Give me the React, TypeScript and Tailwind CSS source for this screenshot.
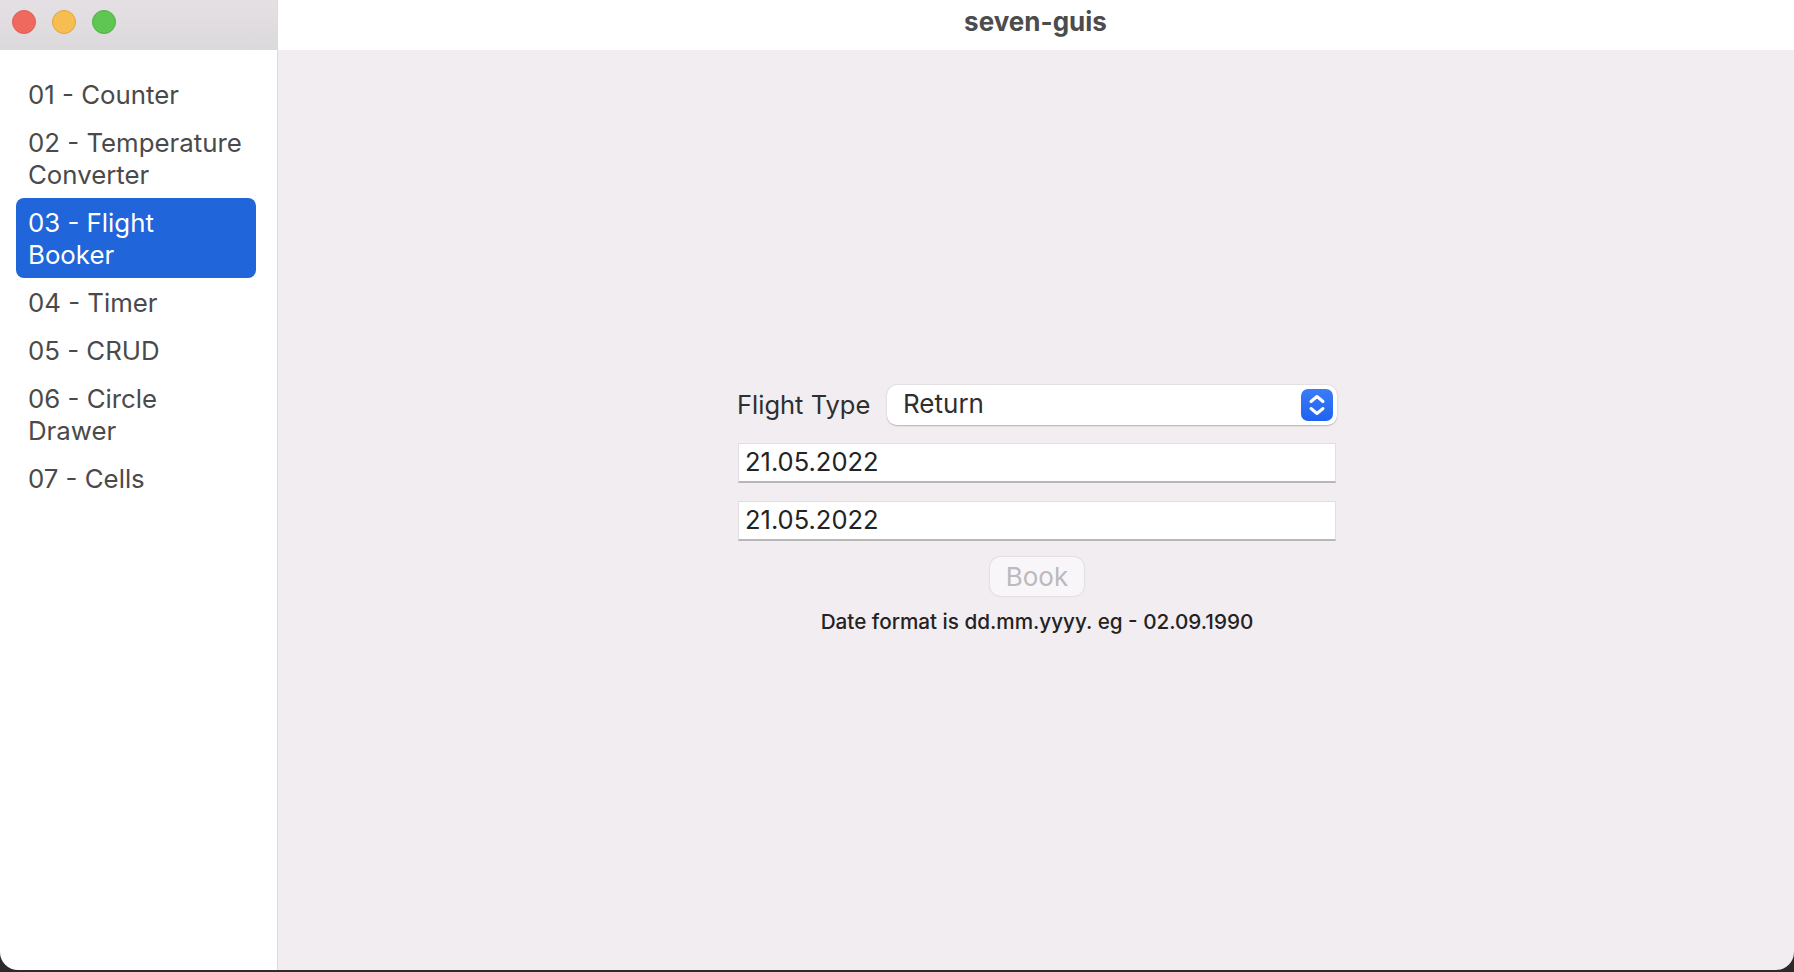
import React from 'react';

const ITEMS = [
  '01 - Counter',
  '02 - Temperature Converter',
  '03 - Flight Booker',
  '04 - Timer',
  '05 - CRUD',
  '06 - Circle Drawer',
  '07 - Cells',
];

function SelectArrows() {
  return (
    <div className="h-[32px] w-[32px] rounded-[7px] bg-gradient-to-b from-[#3b7cf6] to-[#1f62f0]">
      <svg width="32" height="32" viewBox="0 0 32 32" fill="none" stroke="white" strokeWidth="3" strokeLinecap="round" strokeLinejoin="round">
        <path d="M10 12.5 16 7.5l6 5" />
        <path d="M10 19.5 16 24.5l6-5" />
      </svg>
    </div>
  );
}

function DateField({ value }: { value: string }) {
  return (
    <div className="flex h-[40px] w-[598px] items-center border border-[#e2dde1] border-b-[#b9b6b8] border-b-2 bg-white pl-[6px] text-[25.5px] text-[#232323]">
      {value}
    </div>
  );
}

export default function App() {
  return (
    <div className="h-[972px] w-[1794px] overflow-hidden bg-[#2b2b2b] font-['Inter',sans-serif]">
      <div className="flex h-[970px] w-full overflow-hidden rounded-b-[18px]">
        {/* Sidebar */}
        <aside className="flex w-[278px] shrink-0 flex-col border-r border-r-[#dcd8dc] bg-white">
          <div className="flex h-[50px] items-center gap-[16px] bg-gradient-to-b from-[#e4e0e4] to-[#dcd9dd] pb-[6px] pl-[12px]">
            <span className="h-[24px] w-[24px] rounded-full border border-[#dc5d55] bg-[#f0695f]" />
            <span className="h-[24px] w-[24px] rounded-full border border-[#dfa63f] bg-[#f6bd50]" />
            <span className="h-[24px] w-[24px] rounded-full border border-[#52b044] bg-[#5fc553]" />
          </div>
          <nav className="flex flex-col pl-[16px] pr-[21px] pt-[20px]">
            {ITEMS.map((item) => {
              const active = item.startsWith('03');
              return (
                <div
                  key={item}
                  className={`rounded-[8px] pb-[7px] pl-[12px] pr-[11px] pt-[9px] text-[25.8px] leading-[32px] ${
                    active ? 'bg-[#2065d9] text-white' : 'text-[#4a4a4a]'
                  }`}
                >
                  {item}
                </div>
              );
            })}
          </nav>
        </aside>

        {/* Main */}
        <div className="flex min-w-0 flex-1 flex-col bg-[#f2edf1]">
          <header className="flex h-[50px] items-center justify-center bg-white pb-[8px] pr-[1px] text-[26px] font-bold text-[#4c4c4c]">
            seven-guis
          </header>
          <main className="flex flex-1 flex-col items-center justify-center pl-[2px]">
            <div className="flex w-[600px] flex-col items-center">
              <div className="flex w-full items-center justify-between">
                <span className="text-[25.5px] text-[#2f2f2f]">Flight Type</span>
                <div className="flex h-[41px] w-[450px] items-center justify-between rounded-[10px] border-b border-b-[#c0bcbf] bg-white pl-[16px] pr-[4px] text-[26px] text-[#2f2f2f] shadow-[0_0_2px_rgba(0,0,0,0.2)]">
                  <span className="pb-[2px]">Return</span>
                  <SelectArrows />
                </div>
              </div>
              <div className="mt-[17px] flex flex-col gap-[18px]">
                <DateField value="21.05.2022" />
                <DateField value="21.05.2022" />
              </div>
              <button className="mt-[16px] h-[39px] w-[94px] rounded-[10px] bg-[#f8f6f8] text-[26px] text-[#bdb9bc] shadow-[0_0_2px_rgba(0,0,0,0.2)]">
                Book
              </button>
              <p className="mt-[12px] text-[20.7px] font-medium leading-[28px] text-[#232323]">
                Date format is dd.mm.yyyy. eg - 02.09.1990
              </p>
            </div>
          </main>
        </div>
      </div>
    </div>
  );
}
